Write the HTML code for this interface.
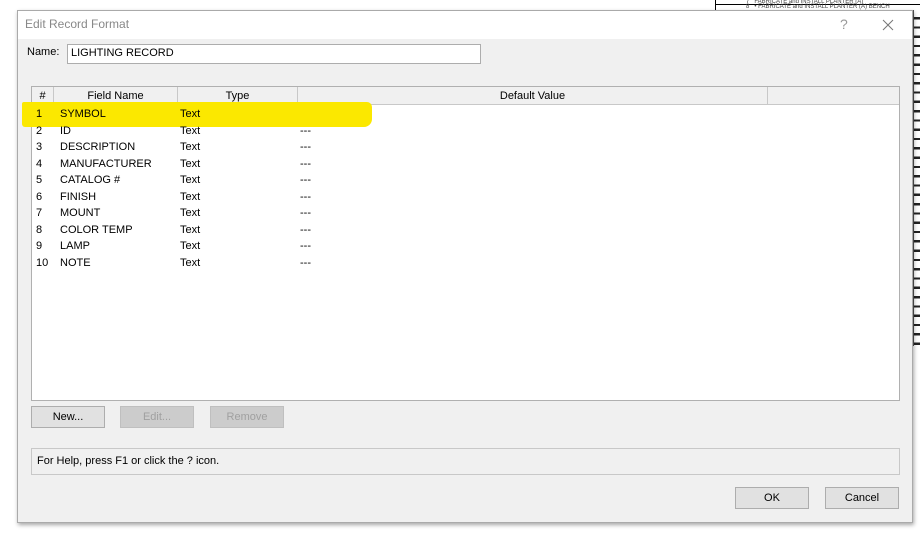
<!DOCTYPE html>
<html><head><meta charset="utf-8"><style>
*{margin:0;padding:0;box-sizing:border-box}
body{width:920px;height:534px;background:#fff;position:relative;overflow:hidden;font-family:"Liberation Sans",Arial,sans-serif;font-size:11px;color:#000}
.a{position:absolute}
.strip{left:913px;top:10px;width:7px;height:336px;background:repeating-linear-gradient(to bottom,#fff 0,#fff 7px,#222 7px,#222 9.3px);border-left:1px solid #555}
.top{left:715px;top:0;width:205px;height:10px;border-left:1px solid #000;font-size:6px;color:#444;line-height:5px}
.dlg{left:17px;top:10px;width:896px;height:513px;background:#f0f0f0;border:1px solid #aaa;box-shadow:1px 2px 4px rgba(0,0,0,.35)}
.title{left:0;top:0;width:894px;height:28px;background:#fff}
.btn{position:absolute;height:22px;background:#e1e1e1;border:1px solid #adadad;text-align:center;line-height:20px;font-size:11px}
.dis{color:#a0a0a0;background:#ccc;border-color:#bfbfbf}
.grid{left:13px;top:75px;width:869px;height:315px;background:#fff;border:1px solid #b0b0b0}
.hdr{left:0;top:0;height:18px;width:867px;background:#f0f0f0;border-bottom:1px solid #c8c8c8}
.hc{position:absolute;top:0;height:18px;border-right:1px solid #c8c8c8;text-align:center;line-height:18px}
.row{position:absolute;left:0;height:16.5px;line-height:16.5px;width:866px}
.row span{position:absolute}
</style></head><body>
<div class="a top"><div style="border-bottom:1px solid #000;height:5px;padding-left:30px">7 &nbsp; FABRICATE and INSTALL PLANTER (A)</div><div style="padding-left:30px">8 &nbsp; • FABRICATE and INSTALL PLANTER (A) BENCH</div></div>
<div class="a strip"></div>
<div class="a dlg">
 <div class="a title"><span class="a" style="left:7px;top:6px;font-size:12px;color:#888">Edit Record Format</span>
 <span class="a" style="left:822px;top:5px;font-size:14px;color:#999">?</span>
 <svg class="a" style="left:864px;top:8px" width="12" height="12"><path d="M1 1L11 11M11 1L1 11" stroke="#777" stroke-width="1"/></svg></div>
 <span class="a" style="left:9px;top:35px">Name:</span>
 <div class="a" style="left:49px;top:33px;width:414px;height:20px;background:#fff;border:1px solid #adadad;padding:2px 3px">LIGHTING RECORD</div>
 <div class="a grid">
  <div class="a hdr">
   <div class="hc" style="left:0;width:22px">#</div>
   <div class="hc" style="left:22px;width:124px">Field Name</div>
   <div class="hc" style="left:146px;width:120px">Type</div>
   <div class="hc" style="left:266px;width:470px">Default Value</div>
  </div>
  <div class="a" style="left:-10px;top:15px;width:350px;height:25px;background:#fbe800;border-radius:2px 5px 8px 3px"></div>
  <div class="a" style="left:0;top:19px;width:866px">
   <div class="row" style="top:0"><span style="left:4px">1</span><span style="left:28px">SYMBOL</span><span style="left:148px">Text</span></div>
   <div class="row" style="top:16.5px"><span style="left:4px">2</span><span style="left:28px">ID</span><span style="left:148px">Text</span><span style="left:268px">---</span></div>
   <div class="row" style="top:33px"><span style="left:4px">3</span><span style="left:28px">DESCRIPTION</span><span style="left:148px">Text</span><span style="left:268px">---</span></div>
   <div class="row" style="top:49.5px"><span style="left:4px">4</span><span style="left:28px">MANUFACTURER</span><span style="left:148px">Text</span><span style="left:268px">---</span></div>
   <div class="row" style="top:66px"><span style="left:4px">5</span><span style="left:28px">CATALOG #</span><span style="left:148px">Text</span><span style="left:268px">---</span></div>
   <div class="row" style="top:82.5px"><span style="left:4px">6</span><span style="left:28px">FINISH</span><span style="left:148px">Text</span><span style="left:268px">---</span></div>
   <div class="row" style="top:99px"><span style="left:4px">7</span><span style="left:28px">MOUNT</span><span style="left:148px">Text</span><span style="left:268px">---</span></div>
   <div class="row" style="top:115.5px"><span style="left:4px">8</span><span style="left:28px">COLOR TEMP</span><span style="left:148px">Text</span><span style="left:268px">---</span></div>
   <div class="row" style="top:132px"><span style="left:4px">9</span><span style="left:28px">LAMP</span><span style="left:148px">Text</span><span style="left:268px">---</span></div>
   <div class="row" style="top:148.5px"><span style="left:4px">10</span><span style="left:28px">NOTE</span><span style="left:148px">Text</span><span style="left:268px">---</span></div>
  </div>
 </div>
 <div class="btn" style="left:13px;top:395px;width:74px">New...</div>
 <div class="btn dis" style="left:102px;top:395px;width:74px">Edit...</div>
 <div class="btn dis" style="left:192px;top:395px;width:74px">Remove</div>
 <div class="a" style="left:13px;top:437px;width:869px;height:27px;border:1px solid #c8c8c8;padding-left:5px;line-height:25px">For Help, press F1 or click the ? icon.</div>
 <div class="btn" style="left:717px;top:476px;width:74px">OK</div>
 <div class="btn" style="left:807px;top:476px;width:74px">Cancel</div>
</div>
</body></html>
